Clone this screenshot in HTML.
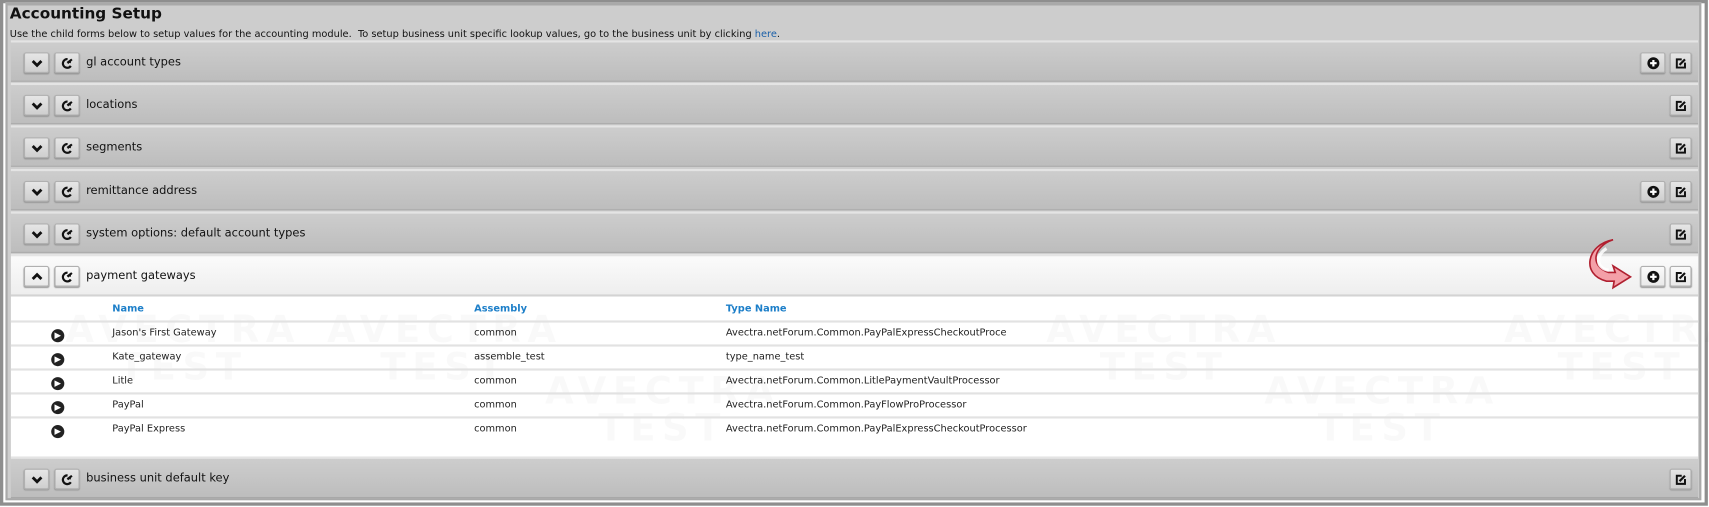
<!DOCTYPE html>
<html><head><meta charset="utf-8"><style>
*{margin:0;padding:0;box-sizing:border-box}
body{width:1709px;height:506px;background:#fff;font-family:Verdana,"DejaVu Sans",sans-serif;position:relative;overflow:hidden}
#w{position:absolute;left:0;top:0;width:1568px;height:465px;transform:scale(1.0899);transform-origin:0 0}
.frame{position:absolute;left:0;top:0;width:1567px;height:464px;border:3px solid #8e8e8e;background:#fff}
.panel{position:absolute;left:5px;top:2px;width:1556px;height:457px;background:#cdcdcd;border:2px solid #a9a9a9;border-top-width:3px}
.title{position:absolute;left:9px;top:5px;font:bold 14px "DejaVu Sans",sans-serif;color:#111}
.desc{position:absolute;left:9px;top:27px;font-size:9px;color:#111}
.desc a{color:#1a5fa8;text-decoration:none}
.row{position:absolute;left:10px;width:1548px;height:38px;background:linear-gradient(#cdcdcd,#bdbdbd);border-top:2px solid #e4e4e4;border-bottom:1px solid #a8a8a8}
.row.open{background:linear-gradient(#fbfbfb,#eeeeee);border-bottom:1px solid #ddd}
.btn{position:absolute;top:9px;width:23px;height:19px;background:linear-gradient(#e6e6e6,#cfcfcf);border:1px solid #b0b0b0;border-radius:2px;box-shadow:0 1px 1px #999}
.open .btn{background:linear-gradient(#fafafa,#e9e9e9)}
.btn svg{position:absolute;left:5px;top:3px}
.lbl{position:absolute;left:69px;top:12px;font-size:10.5px;color:#111}
.tbl{position:absolute;left:10px;top:272px;width:1548px;height:147px;background:#fff}
.th{position:absolute;top:7px;font-size:9px;font-weight:bold;color:#1d7fc9}
.tr{position:absolute;left:0;width:1548px;height:22px;border-top:2px solid #e2e2e2;font-size:9px;color:#222}
.tr span{position:absolute;top:5px}
.dot{position:absolute;left:37px;top:6px;width:12px;height:12px;border-radius:50%;background:#222}
.dot:after{content:"";position:absolute;left:3px;top:3px;border-left:6px solid #fff;border-top:3px solid transparent;border-bottom:3px solid transparent}
.wm{position:absolute;font:bold 34px "DejaVu Sans",sans-serif;color:rgba(0,0,0,0.025);letter-spacing:6px;line-height:34px;text-align:center}
</style></head><body>
<svg width="0" height="0" style="position:absolute"><defs>
<symbol id="dn" viewBox="0 0 12 12"><path d="M2 4 L6 8 L10 4" fill="none" stroke="#111" stroke-width="2.6"/></symbol>
<symbol id="up" viewBox="0 0 12 12"><path d="M2 8 L6 4 L10 8" fill="none" stroke="#111" stroke-width="2.6"/></symbol>
<symbol id="rf" viewBox="0 0 12 12"><path d="M9 8.5 A4 4 0 1 1 6 2.2" fill="none" stroke="#111" stroke-width="2"/><path d="M5 5 L9 2 L9 6 Z" fill="#111"/><path d="M6 6 L10 2.5" stroke="#111" stroke-width="1.8"/></symbol>
<symbol id="pl" viewBox="0 0 12 12"><circle cx="6" cy="6" r="5.5" fill="#111"/><path d="M6 3v6M3 6h6" stroke="#fff" stroke-width="2"/></symbol>
<symbol id="ed" viewBox="0 0 12 12"><path d="M7 2.5H2.5V10H10V5.5" fill="none" stroke="#111" stroke-width="1.8"/><path d="M5 7.5 L10 2.5" stroke="#111" stroke-width="2"/></symbol>
</defs></svg>
<div id="w">
<div class="frame"></div>
<div class="panel"></div>
<div class="title">Accounting Setup</div>
<div class="desc">Use the child forms below to setup values for the accounting module.&nbsp; To setup business unit specific lookup values, go to the business unit by clicking <a>here</a>.</div>

<div class="row" style="top:37px"><div class="btn" style="left:12px"><svg width="12" height="12"><use href="#dn"/></svg></div><div class="btn" style="left:40px"><svg width="12" height="12"><use href="#rf"/></svg></div><div class="lbl">gl account types</div><div class="btn" style="left:1495px"><svg width="12" height="12"><use href="#pl"/></svg></div><div class="btn" style="left:1522px;width:20px"><svg width="12" height="12" style="left:3px"><use href="#ed"/></svg></div></div>
<div class="row" style="top:76px"><div class="btn" style="left:12px"><svg width="12" height="12"><use href="#dn"/></svg></div><div class="btn" style="left:40px"><svg width="12" height="12"><use href="#rf"/></svg></div><div class="lbl">locations</div><div class="btn" style="left:1522px;width:20px"><svg width="12" height="12" style="left:3px"><use href="#ed"/></svg></div></div>
<div class="row" style="top:115px"><div class="btn" style="left:12px"><svg width="12" height="12"><use href="#dn"/></svg></div><div class="btn" style="left:40px"><svg width="12" height="12"><use href="#rf"/></svg></div><div class="lbl">segments</div><div class="btn" style="left:1522px;width:20px"><svg width="12" height="12" style="left:3px"><use href="#ed"/></svg></div></div>
<div class="row" style="top:155px"><div class="btn" style="left:12px"><svg width="12" height="12"><use href="#dn"/></svg></div><div class="btn" style="left:40px"><svg width="12" height="12"><use href="#rf"/></svg></div><div class="lbl">remittance address</div><div class="btn" style="left:1495px"><svg width="12" height="12"><use href="#pl"/></svg></div><div class="btn" style="left:1522px;width:20px"><svg width="12" height="12" style="left:3px"><use href="#ed"/></svg></div></div>
<div class="row" style="top:194px"><div class="btn" style="left:12px"><svg width="12" height="12"><use href="#dn"/></svg></div><div class="btn" style="left:40px"><svg width="12" height="12"><use href="#rf"/></svg></div><div class="lbl">system options: default account types</div><div class="btn" style="left:1522px;width:20px"><svg width="12" height="12" style="left:3px"><use href="#ed"/></svg></div></div>
<div class="row open" style="top:233px"><div class="btn" style="left:12px"><svg width="12" height="12"><use href="#up"/></svg></div><div class="btn" style="left:40px"><svg width="12" height="12"><use href="#rf"/></svg></div><div class="lbl">payment gateways</div><div class="btn" style="left:1495px"><svg width="12" height="12"><use href="#pl"/></svg></div><div class="btn" style="left:1522px;width:20px"><svg width="12" height="12" style="left:3px"><use href="#ed"/></svg></div></div>

<div class="tbl">
<div class="wm" style="left:50px;top:14px">AVECTRA<br>TEST</div>
<div class="wm" style="left:290px;top:14px">AVECTRA<br>TEST</div>
<div class="wm" style="left:950px;top:14px">AVECTRA<br>TEST</div>
<div class="wm" style="left:1370px;top:14px">AVECTRA<br>TEST</div>
<div class="wm" style="left:490px;top:70px">AVECTRA<br>TEST</div>
<div class="wm" style="left:1150px;top:70px">AVECTRA<br>TEST</div>
<div class="th" style="left:93px">Name</div><div class="th" style="left:425px">Assembly</div><div class="th" style="left:656px">Type Name</div>
<div class="tr" style="top:22px"><div class="dot"></div><span style="left:93px">Jason's First Gateway</span><span style="left:425px">common</span><span style="left:656px">Avectra.netForum.Common.PayPalExpressCheckoutProce</span></div>
<div class="tr" style="top:44px"><div class="dot"></div><span style="left:93px">Kate_gateway</span><span style="left:425px">assemble_test</span><span style="left:656px">type_name_test</span></div>
<div class="tr" style="top:66px"><div class="dot"></div><span style="left:93px">Litle</span><span style="left:425px">common</span><span style="left:656px">Avectra.netForum.Common.LitlePaymentVaultProcessor</span></div>
<div class="tr" style="top:88px"><div class="dot"></div><span style="left:93px">PayPal</span><span style="left:425px">common</span><span style="left:656px">Avectra.netForum.Common.PayFlowProProcessor</span></div>
<div class="tr" style="top:110px"><div class="dot"></div><span style="left:93px">PayPal Express</span><span style="left:425px">common</span><span style="left:656px">Avectra.netForum.Common.PayPalExpressCheckoutProcessor</span></div>
</div>

<div class="row" style="top:419px"><div class="btn" style="left:12px"><svg width="12" height="12"><use href="#dn"/></svg></div><div class="btn" style="left:40px"><svg width="12" height="12"><use href="#rf"/></svg></div><div class="lbl">business unit default key</div><div class="btn" style="left:1522px;width:20px"><svg width="12" height="12" style="left:3px"><use href="#ed"/></svg></div></div>

<svg style="position:absolute;left:1452px;top:218px" width="52" height="48" viewBox="0 0 52 48">
<path d="M28 2 C10 8 6 26 24 32 L30 32 L28 26 L44 36 L28 46 L29 40 L22 40 C-2 34 4 6 28 2 Z" fill="#f4a0a8" stroke="#b02030" stroke-width="1.5"/>
<path d="M22 10 C12 16 12 28 24 30" fill="none" stroke="#fff" stroke-width="3" opacity=".85"/>
</svg>
</div>
</body></html>
